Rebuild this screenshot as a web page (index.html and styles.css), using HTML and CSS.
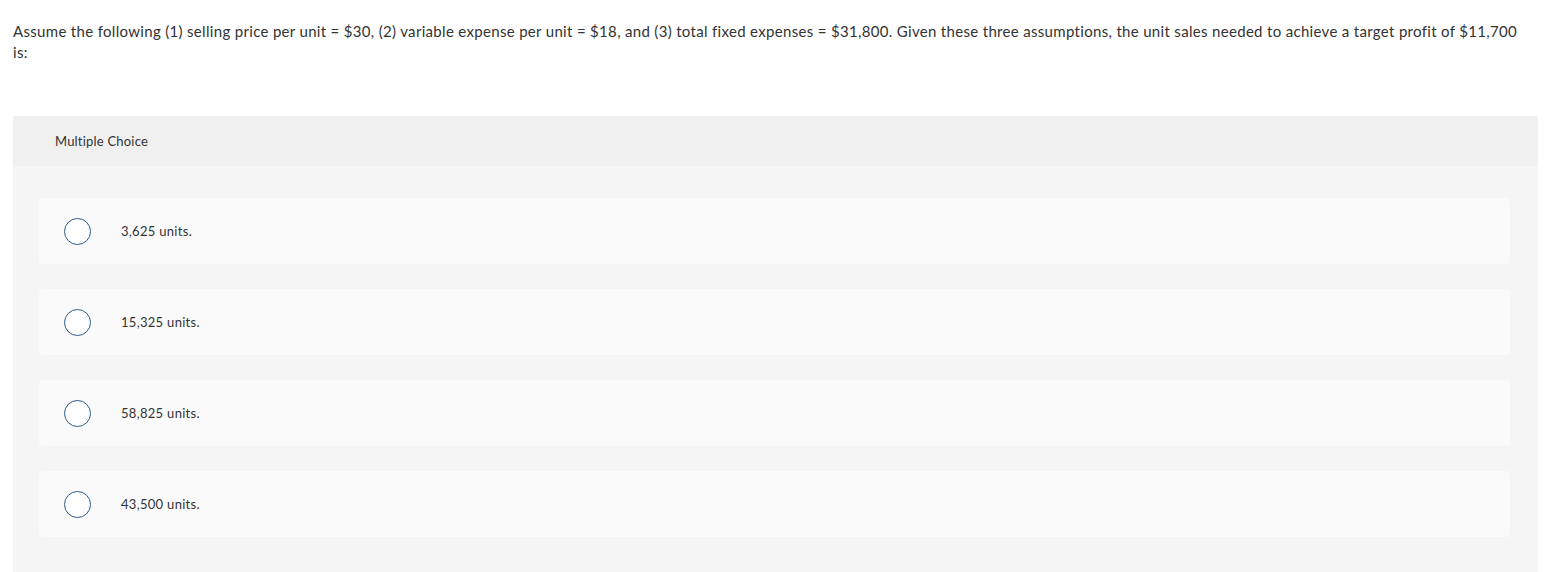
FILE: index.html
```html
<!DOCTYPE html>
<html>
<head>
<meta charset="utf-8">
<link rel="stylesheet" href="styles.css">
</head>
<body>
<div class="page">
  <p class="question">Assume the following (1) selling price per unit = $30, (2) variable expense per unit = $18, and (3) total fixed expenses = $31,800. Given these three assumptions, the unit sales needed to achieve a target profit of $11,700 is:</p>
  <div class="panel">
    <div class="panel-head">Multiple Choice</div>
    <div class="panel-body">
      <label class="option"><span class="radio"></span><span class="opt-text">3,625 units.</span></label>
      <label class="option"><span class="radio"></span><span class="opt-text">15,325 units.</span></label>
      <label class="option"><span class="radio"></span><span class="opt-text">58,825 units.</span></label>
      <label class="option"><span class="radio"></span><span class="opt-text">43,500 units.</span></label>
    </div>
  </div>
</div>
</body>
</html>
```

FILE: styles.css
```css
html, body {
  margin: 0;
  padding: 0;
  background: #fff;
}
body {
  font-family: "Lato", "Liberation Sans", sans-serif;
  font-variant-ligatures: none;
  color: #333;
}
.page {
  margin-left: 13px;
  width: 1525px;
  padding-top: 21px;
}
.question {
  margin: 0;
  font-size: 15px;
  line-height: 21px;
  letter-spacing: 0.32px;
  width: 1515px;
}
.panel {
  margin-top: 53px;
  border-radius: 3px 3px 0 0;
  overflow: hidden;
}
.panel-head {
  background: #f0f0f0;
  height: 50px;
  display: flex;
  align-items: center;
  padding-left: 42px;
  font-size: 13px;
  letter-spacing: 0.2px;
}
.panel-body {
  background: #f5f5f5;
  padding: 32px 28px 60px 26px;
  display: flex;
  flex-direction: column;
  gap: 25px;
}
.option {
  background: #fafafa;
  border-radius: 4px;
  height: 66px;
  display: flex;
  align-items: center;
  padding-left: 25px;
}
.radio {
  width: 25px;
  height: 25px;
  border: 1.5px solid #2a5a8c;
  border-radius: 50%;
  background: #fff;
  flex: none;
}
.opt-text {
  margin-left: 30px;
  font-size: 13px;
  letter-spacing: 0.3px;
}
```
